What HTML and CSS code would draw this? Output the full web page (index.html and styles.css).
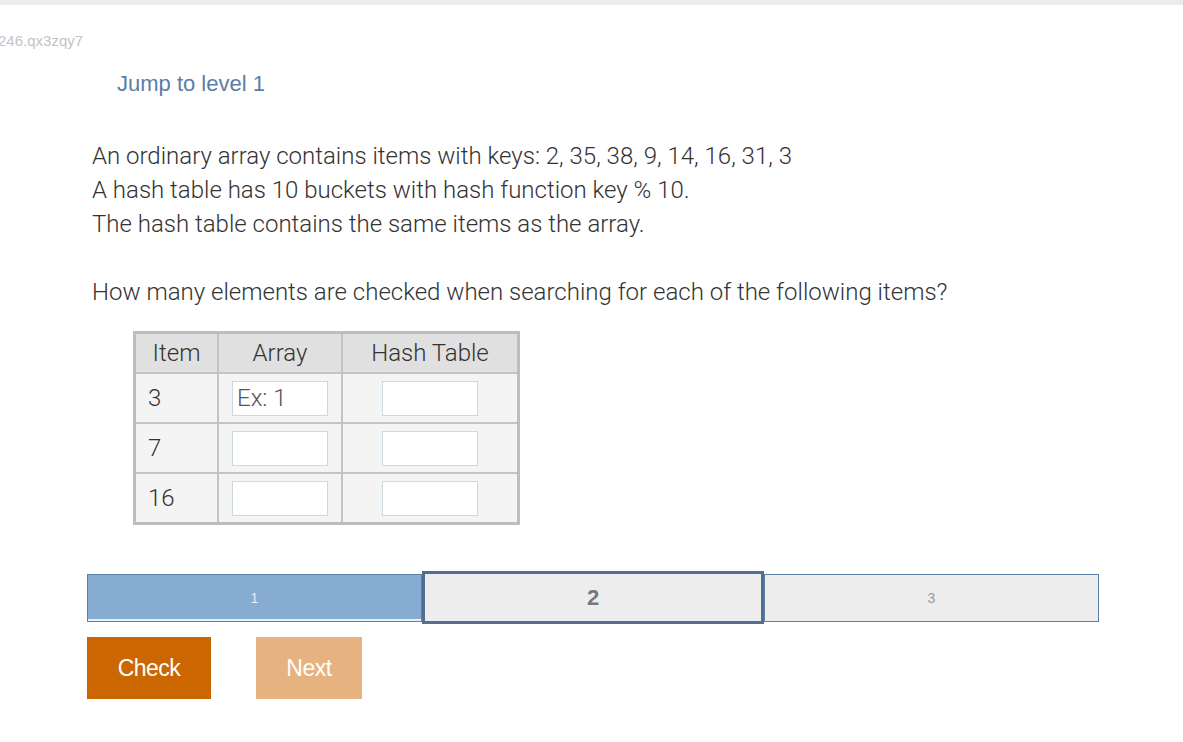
FILE: index.html
```html
<!DOCTYPE html>
<html lang="en">
<head>
  <meta charset="UTF-8" />
  <title>Hash table search</title>
  <link rel="stylesheet" href="styles.css">
</head>
<body>

<div class="top-bar"></div>

<div class="activity-id">246.qx3zqy7</div>

<div class="jump-link">Jump to level 1</div>

<div class="prompt">
  <p>An ordinary array contains items with keys: 2, 35, 38, 9, 14, 16, 31, 3<br>
  A hash table has 10 buckets with hash function key % 10.<br>
  The hash table contains the same items as the array.</p>
  <p>How many elements are checked when searching for each of the following items?</p>
</div>

<table class="answer-table">
  <tr>
    <th class="col-item">Item</th>
    <th class="col-array">Array</th>
    <th class="col-hash">Hash Table</th>
  </tr>
  <tr>
    <td>3</td>
    <td class="cell-input"><input type="text" placeholder="Ex: 1" /></td>
    <td class="cell-input"><input type="text" /></td>
  </tr>
  <tr>
    <td>7</td>
    <td class="cell-input"><input type="text" /></td>
    <td class="cell-input"><input type="text" /></td>
  </tr>
  <tr>
    <td>16</td>
    <td class="cell-input"><input type="text" /></td>
    <td class="cell-input"><input type="text" /></td>
  </tr>
</table>

<div class="levels">
  <div class="level done">1</div>
  <div class="level current">2</div>
  <div class="level">3</div>
</div>

<div class="actions">
  <button class="btn check">Check</button>
  <button class="btn next">Next</button>
</div>

</body>
</html>
```

FILE: styles.css
```css
body {
  font-family: "Liberation Sans", Arial, sans-serif;
  background-color: white;
  margin: 0;
  padding: 0;
}

.top-bar {
  height: 5px;
  background: #ececec;
}

.activity-id {
  margin-top: 27px;
  margin-left: -2px;
  font-size: 15px;
  color: #c4c4c4;
  height: 16px;
}

.jump-link {
  margin-top: 23px;
  margin-left: 117px;
  font-size: 22px;
  color: #5b7da5;
}

.prompt {
  margin-left: 92px;
  margin-top: 42px;
  font-family: Roboto, sans-serif;
  font-weight: 300;
  font-size: 24px;
  line-height: 34px;
  color: #333;
}

.prompt p {
  margin: 0 0 34px 0;
}

.prompt p:last-child {
  margin-bottom: 22px;
}

.answer-table {
  margin-left: 133px;
  border-collapse: collapse;
  border: 3px solid #bdbdbd;
  font-family: Roboto, sans-serif;
  font-weight: 300;
  font-size: 24px;
  color: #333;
}

.answer-table th {
  background: #e0e0e0;
  font-weight: 300;
  height: 38px;
  padding: 0;
  border: 2px solid #c4c4c4;
}

.col-item { width: 81px; }
.col-array { width: 122px; }
.col-hash { width: 174px; }

.answer-table td {
  background: #f4f4f4;
  border: 2px solid #c4c4c4;
  height: 48px;
  padding: 0 0 0 12px;
}

.answer-table td.cell-input {
  padding: 0;
  text-align: center;
}

.answer-table input {
  width: 96px;
  height: 35px;
  box-sizing: border-box;
  border: 1px solid #ccd9e0;
  background: white;
  font-family: Roboto, sans-serif;
  font-weight: 300;
  font-size: 24px;
  padding: 0 4px;
  color: #333;
}

.answer-table input::placeholder {
  color: #555;
}

.levels {
  display: flex;
  margin-left: 87px;
  margin-top: 49px;
  width: 1012px;
  height: 48px;
}

.level {
  flex: 1;
  display: flex;
  align-items: center;
  justify-content: center;
  background: #ededed;
  border: 1px solid #5b81a8;
  font-size: 14px;
  color: #999;
}

.level.done {
  background: #87acd2;
  color: #e6eef6;
  box-shadow: inset 0 -2px 0 #e8f0f8;
}

.level.current {
  flex: 0 0 342px;
  box-sizing: border-box;
  margin: -3px 0 -2px 0;
  border: 3px solid #556d90;
  font-size: 22px;
  font-weight: bold;
  color: #777;
}

.actions {
  display: flex;
  gap: 45px;
  margin-left: 87px;
  margin-top: 15px;
}

.btn {
  height: 62px;
  border: none;
  font-family: "Liberation Sans", Arial, sans-serif;
  font-size: 23px;
  color: white;
  letter-spacing: -0.5px;
}

.btn.check {
  width: 124px;
  background: #cc6600;
}

.btn.next {
  width: 106px;
  background: #e6b380;
}
```
